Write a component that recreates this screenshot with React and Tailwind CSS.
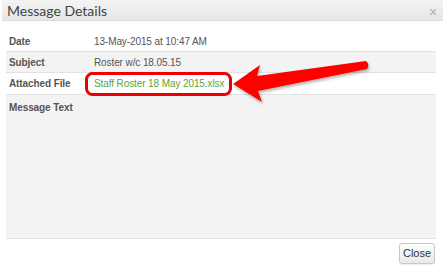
export default function App() {
  const label = "w-[88px] pl-[3px] font-bold text-[#555]";
  return (
    <div className="relative w-[445px] h-[275px] bg-white overflow-hidden text-[10px] tracking-[-0.1px] text-[#555]" style={{ fontFamily: '"Liberation Sans", Arial, sans-serif' }}>
      <div className="mx-[2px] h-[21px] flex items-center justify-between pl-[5px] pr-[6px] bg-gradient-to-b from-[#f4f4f4] to-[#e6e6e6] border-b border-[#dcdcdc]">
        <span className="text-[14px] tracking-normal text-[#444]" style={{ fontFamily: 'Lato, "Open Sans", sans-serif' }}>Message Details</span>
        <span className="text-[14px] text-[#b0b0b0] leading-none translate-y-[2px]">×</span>
      </div>
      <div className="mx-[6px] mt-[10px] w-[430px] flex flex-col">
        <div className="h-[20px] flex items-center bg-white">
          <div className={label}>Date</div>
          <div>13-May-2015 at 10:47 AM</div>
        </div>
        <div className="h-[21px] flex items-center bg-[#f3f3f3] border-t border-[#e2e2e2]">
          <div className={label}>Subject</div>
          <div>Roster w/c 18.05.15</div>
        </div>
        <div className="h-[22px] flex items-center bg-white border-t border-[#e2e2e2]">
          <div className={label}>Attached File</div>
          <div className="text-[#62a335]">Staff Roster 18 May 2015.xlsx</div>
        </div>
        <div className="h-[145px] bg-[#f3f3f3] border-t border-b border-[#e2e2e2] pt-[5px]">
          <div className={label}>Message Text</div>
        </div>
      </div>
      <div className="flex justify-end pr-[10px] pt-[4px]">
        <button className="h-[21px] w-[36px] rounded-[3px] border border-[#c8c8c8] bg-gradient-to-b from-white to-[#e8e8e8] text-[11px] tracking-normal text-[#333] shadow-[0_1px_1px_rgba(0,0,0,0.08)]">Close</button>
      </div>
      <svg className="absolute left-0 top-0 pointer-events-none" width="445" height="275">
        <defs>
          <filter id="sh" x="-20%" y="-20%" width="140%" height="140%">
            <feDropShadow dx="1" dy="2" stdDeviation="1.5" floodColor="#000" floodOpacity="0.3" />
          </filter>
        </defs>
        <rect x="86.5" y="73.5" width="144" height="21" rx="6" fill="none" stroke="#ee0000" strokeWidth="3" />
        <path d="M233 84 L260 65 L257 76 L366 61 Q370 64 367 69 L258 91 L262 102 Z" fill="#ff0000" filter="url(#sh)" />
      </svg>
    </div>
  );
}
